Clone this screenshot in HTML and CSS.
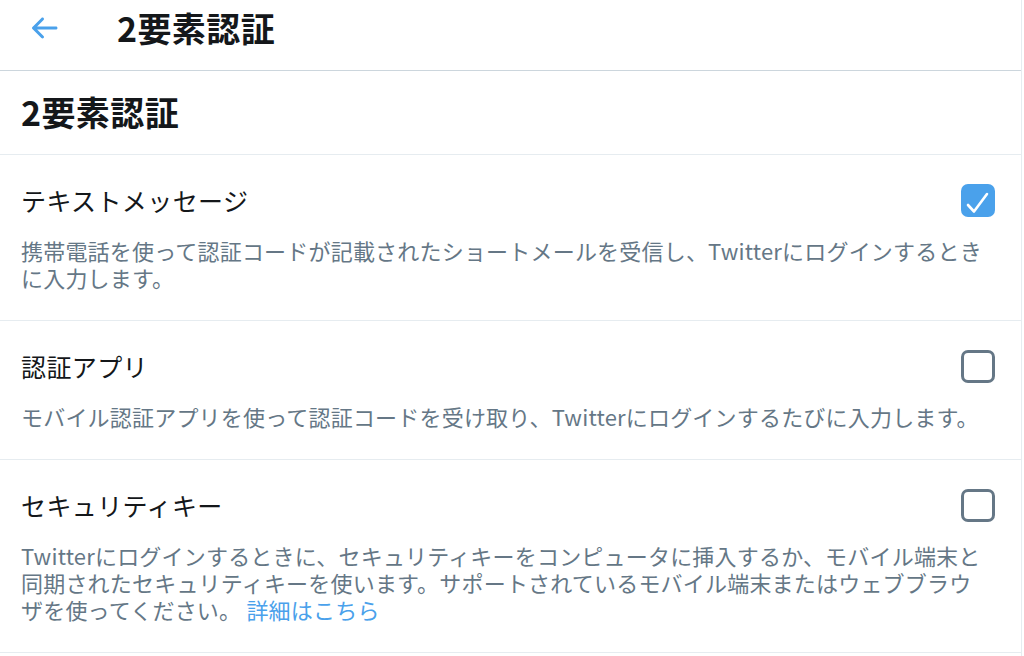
FILE: index.html
```html
<!DOCTYPE html>
<html lang="ja">
<head>
  <meta charset="UTF-8">
  <meta name="viewport" content="width=device-width, initial-scale=1.0">
  <title>2要素認証</title>
  <link rel="stylesheet" href="styles.css">
</head>
<body>
  <div class="page">
    <header class="topbar">
      <a class="back" href="#" aria-label="戻る">
        <svg viewBox="0 0 24 24" width="36" height="36"><path d="M20 11H7.414l4.293-4.293c.39-.39.39-1.023 0-1.414s-1.023-.39-1.414 0l-6 6c-.39.39-.39 1.023 0 1.414l6 6c.195.195.45.293.707.293s.512-.098.707-.293c.39-.39.39-1.023 0-1.414L7.414 13H20c.553 0 1-.447 1-1s-.447-1-1-1z"/></svg>
      </a>
      <h1 class="topbar-title">2要素認証</h1>
    </header>

    <h2 class="section-title">2要素認証</h2>

    <div class="option">
      <div class="option-head">
        <span class="option-title">テキストメッセージ</span>
        <span class="box checked">
          <svg viewBox="0 0 34 33" width="34" height="33"><polyline points="7,21 13,27.5 26,10" fill="none" stroke="#fff" stroke-width="2.6" stroke-linecap="round" stroke-linejoin="round"/></svg>
        </span>
      </div>
      <p class="option-desc">携帯電話を使って認証コードが記載されたショートメールを受信し、Twitterにログインするときに入力します。</p>
    </div>

    <div class="option">
      <div class="option-head">
        <span class="option-title">認証アプリ</span>
        <span class="box"></span>
      </div>
      <p class="option-desc">モバイル認証アプリを使って認証コードを受け取り、Twitterにログインするたびに入力します。</p>
    </div>

    <div class="option">
      <div class="option-head">
        <span class="option-title">セキュリティキー</span>
        <span class="box"></span>
      </div>
      <p class="option-desc">Twitterにログインするときに、セキュリティキーをコンピュータに挿入するか、モバイル端末と同期されたセキュリティキーを使います。サポートされているモバイル端末またはウェブブラウザを使ってください。 <a href="#">詳細はこちら</a></p>
    </div>
  </div>
</body>
</html>
```

FILE: styles.css
```css
/* Basic page styling */
body {
  margin: 0;
  background: #fff;
  color: #14171a;
  font-family: "Noto Sans CJK JP", "Noto Sans", sans-serif;
}

.page {
  width: 1021px;
  border-right: 1px solid #e6ecf0;
  min-height: 656px;
}

/* Top bar with back arrow */
.topbar {
  display: flex;
  align-items: flex-start;
  height: 71px;
  box-sizing: border-box;
  padding: 10px 0 0 26px;
  border-bottom: 1px solid #ccd6dd;
}
.back { display: block; height: 36px; }
.back svg { fill: #4aa1eb; display: block; }
.topbar-title {
  margin: -2px 0 0 55px;
  font-size: 34px;
  line-height: 40px;
  font-weight: 700;
  letter-spacing: 0.4px;
}

.section-title {
  margin: 0;
  padding: 21px 21px 22px;
  font-size: 34px;
  line-height: 40px;
  font-weight: 700;
  letter-spacing: 0.4px;
  border-bottom: 1px solid #e6ecf0;
}

/* Option rows */
.option {
  padding: 29px 26px 29px 21px;
  border-bottom: 1px solid #e6ecf0;
}
.option-head {
  display: flex;
  justify-content: space-between;
  align-items: center;
  height: 32px;
}
.option-title {
  font-size: 25px;
  line-height: 32px;
  letter-spacing: 0.4px;
}
.option-desc {
  margin: 21px 8px 0 0;
  font-size: 22px;
  line-height: 27px;
  letter-spacing: 0.2px;
  color: #657786;
}
.option-desc a {
  color: #4aa1eb;
  text-decoration: none;
}

/* Checkboxes */
.box {
  width: 34px;
  height: 33px;
  box-sizing: border-box;
  border: 3px solid #657786;
  border-radius: 7px;
}
.box.checked {
  border: none;
  background: #4aa1eb;
}
.box svg { display: block; }
```
